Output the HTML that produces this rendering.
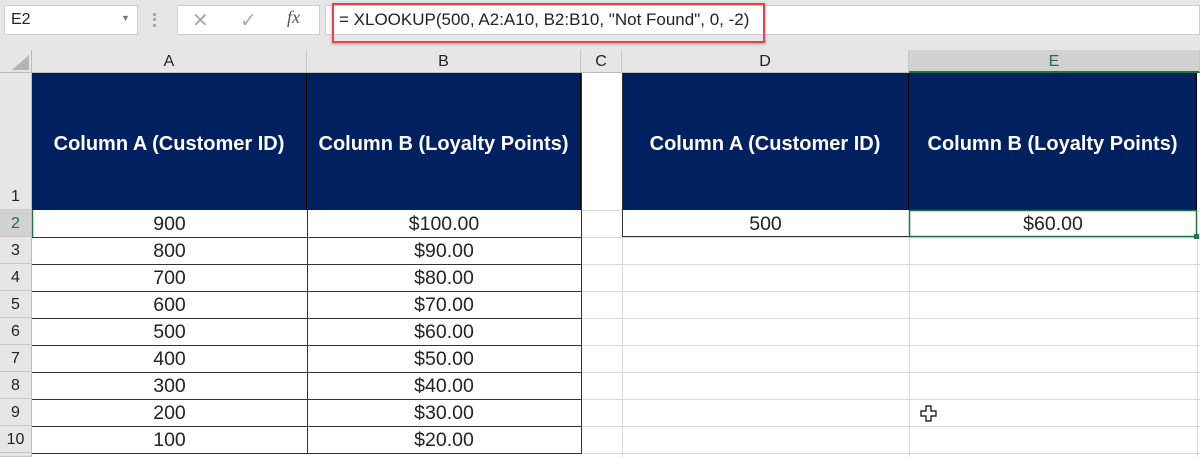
<!DOCTYPE html><html><head><style>
*{margin:0;padding:0;box-sizing:border-box}
body{width:1200px;height:457px;background:#fff;position:relative;overflow:hidden;font-family:"Liberation Sans",sans-serif}
.a{position:absolute}
.ch{position:absolute;top:50px;height:23px;background:#e6e6e6;border-right:1px solid #c8c8c8;border-bottom:1px solid #bdbdbd;text-align:center;font-size:16px;line-height:23px;color:#222}
.rh{position:absolute;left:0;width:32px;background:#e6e6e6;border-bottom:1px solid #c8c8c8;border-right:1px solid #bdbdbd;text-align:center;font-size:16px;color:#222}
.hd{position:absolute;top:73px;height:137px;background:#002060;color:#fff;font-weight:bold;font-size:20px;text-align:center;line-height:142px;border-right:1px solid #000}
.c{position:absolute;text-align:center;font-size:19.5px;color:#222;line-height:27px}
</style></head><body>
<div class="a" style="left:0;top:0;width:1200px;height:50px;background:#e6e6e6"></div>
<div class="a" style="left:4px;top:5px;width:134px;height:30px;background:#fff;border:1px solid #d0d0d0;font-size:16px;line-height:28px;padding-left:6px;color:#222">E2</div>
<div class="a" style="left:121px;top:13px;font-size:9px;color:#777">▼</div>
<div class="a" style="left:153px;top:13px;width:3px;height:14px;border-left:3px dotted #aaa"></div>
<div class="a" style="left:177px;top:5px;width:143px;height:30px;background:#fff;border:1px solid #d0d0d0"></div>
<div class="a" style="left:192px;top:8px;font-size:20px;color:#aaa">✕</div>
<div class="a" style="left:240px;top:8px;font-size:20px;color:#aaa">✓</div>
<div class="a" style="left:287px;top:7px;font-size:18px;color:#555;font-style:italic;font-family:'Liberation Serif',serif">fx</div>
<div class="a" style="left:325px;top:5px;width:875px;height:30px;background:#fff;border:1px solid #d0d0d0"></div>
<div class="a" style="left:332px;top:3px;width:433px;height:40px;border:2px solid #e8434a;box-shadow:0 1px 3px rgba(0,0,0,.3)"></div>
<div class="a" style="left:339px;top:10px;font-size:17px;color:#222">= XLOOKUP(500, A2:A10, B2:B10, "Not Found", 0, -2)</div>

<div class="a" style="left:0;top:50px;width:32px;height:23px;background:#e6e6e6;border-right:1px solid #bdbdbd;border-bottom:1px solid #bdbdbd"></div>
<div class="a" style="left:12px;top:55px;width:0;height:0;border-left:17px solid transparent;border-bottom:15px solid #b4b4b4"></div>
<div class="ch" style="left:32px;width:275px">A</div>
<div class="ch" style="left:307px;width:274px">B</div>
<div class="ch" style="left:581px;width:41px">C</div>
<div class="ch" style="left:622px;width:287px">D</div>
<div class="ch" style="left:909px;width:291px;background:#d2d2d2;color:#217346;border-bottom:2px solid #217346">E</div>

<div class="rh" style="top:73px;height:137px;line-height:1;"><span style="position:absolute;left:0;right:0;bottom:4px">1</span></div>

<div class="hd" style="left:32px;width:275px">Column A (Customer ID)</div>
<div class="hd" style="left:307px;width:274px">Column B (Loyalty Points)</div>
<div class="hd" style="left:622px;width:287px">Column A (Customer ID)</div>
<div class="hd" style="left:909px;width:288px">Column B (Loyalty Points)</div>

<svg class="a" style="left:0;top:0" width="1200" height="457">
<g stroke="#d9d9d9" stroke-width="1">
<line x1="622.5" y1="210" x2="622.5" y2="457"/><line x1="909.5" y1="237" x2="909.5" y2="457"/><line x1="1197.5" y1="237" x2="1197.5" y2="457"/>
<line x1="32" y1="453.5" x2="1200" y2="453.5"/>
</g>
<g stroke="#d9d9d9">
<line x1="581" y1="237.5" x2="1200" y2="237.5"/><line x1="581" y1="264.5" x2="1200" y2="264.5"/><line x1="581" y1="291.5" x2="1200" y2="291.5"/><line x1="581" y1="318.5" x2="1200" y2="318.5"/><line x1="581" y1="345.5" x2="1200" y2="345.5"/><line x1="581" y1="372.5" x2="1200" y2="372.5"/><line x1="581" y1="399.5" x2="1200" y2="399.5"/><line x1="581" y1="426.5" x2="1200" y2="426.5"/>
<line x1="581" y1="210.5" x2="622" y2="210.5"/>
</g>
<g stroke="#333">
<line x1="32" y1="237.5" x2="581" y2="237.5"/><line x1="32" y1="264.5" x2="581" y2="264.5"/><line x1="32" y1="291.5" x2="581" y2="291.5"/><line x1="32" y1="318.5" x2="581" y2="318.5"/><line x1="32" y1="345.5" x2="581" y2="345.5"/><line x1="32" y1="372.5" x2="581" y2="372.5"/><line x1="32" y1="399.5" x2="581" y2="399.5"/><line x1="32" y1="426.5" x2="581" y2="426.5"/><line x1="32" y1="453.5" x2="581" y2="453.5"/>
<line x1="307.5" y1="210" x2="307.5" y2="454"/><line x1="581.5" y1="73" x2="581.5" y2="454"/>
<line x1="622.5" y1="73" x2="622.5" y2="237"/><line x1="622" y1="236.5" x2="909" y2="236.5"/>
</g>
<rect x="909.5" y="210.5" width="287" height="26" fill="none" stroke="#217346" stroke-width="1.5"/>
<rect x="1194" y="234" width="5" height="5" fill="#217346"/>
<line x1="32.5" y1="210" x2="32.5" y2="237" stroke="#217346" stroke-width="1.5"/>
<path d="M921 411h5v-5h5v5h5v5h-5v5h-5v-5h-5z" fill="#fff" stroke="#000" stroke-width="1.2"/>
</svg>

<div class="rh" style="top:210px;height:27px;line-height:27px;background:#d2d2d2;color:#217346">2</div>
<div class="rh" style="top:237px;height:27px;line-height:27px">3</div>
<div class="rh" style="top:264px;height:27px;line-height:27px">4</div>
<div class="rh" style="top:291px;height:27px;line-height:27px">5</div>
<div class="rh" style="top:318px;height:27px;line-height:27px">6</div>
<div class="rh" style="top:345px;height:27px;line-height:27px">7</div>
<div class="rh" style="top:372px;height:27px;line-height:27px">8</div>
<div class="rh" style="top:399px;height:27px;line-height:27px">9</div>
<div class="rh" style="top:426px;height:27px;line-height:27px">10</div>
<div class="rh" style="top:453px;height:4px"></div>

<div class="c" style="left:32px;width:275px;top:211px">900<br>800<br>700<br>600<br>500<br>400<br>300<br>200<br>100</div>
<div class="c" style="left:307px;width:274px;top:211px">$100.00<br>$90.00<br>$80.00<br>$70.00<br>$60.00<br>$50.00<br>$40.00<br>$30.00<br>$20.00</div>
<div class="c" style="left:622px;width:287px;top:211px">500</div>
<div class="c" style="left:909px;width:288px;top:211px">$60.00</div>
</body></html>
